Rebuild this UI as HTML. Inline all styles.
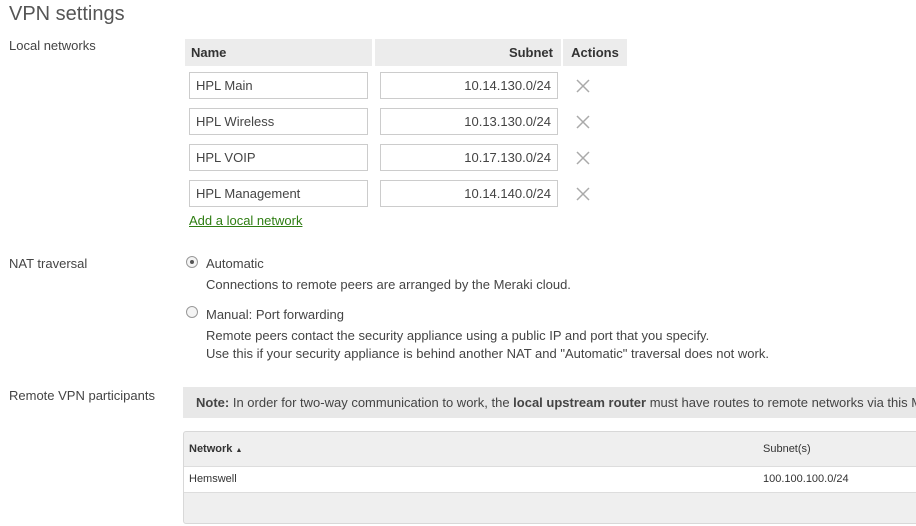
<!DOCTYPE html>
<html><head><style>
body{margin:0;width:916px;height:526px;background:#fff;font-family:"Liberation Sans",Arial,sans-serif;color:#333;position:relative;overflow:hidden}
.a{position:absolute;white-space:nowrap}
.l{font-size:13px;color:#444}
.hd{background:#ececec;height:27px;top:39px;font-size:13px;font-weight:bold;line-height:27px;color:#333}
.in{border:1px solid #ccc;height:25px;line-height:25px;font-size:13px;color:#444;background:#fff;box-sizing:content-box}
.x{width:14px;height:14px}
.r{width:10px;height:10px;border:1px solid #999;border-radius:50%;background:#f4f4f4}
</style></head><body>
<div class="a" style="left:9px;top:3px;font-size:20px;color:#555">VPN settings</div>
<div class="a l" style="left:9px;top:38px">Local networks</div>
<div class="a hd" style="left:185px;width:181px;padding-left:6px">Name</div>
<div class="a hd" style="left:375px;width:178px;text-align:right;padding-right:8px">Subnet</div>
<div class="a hd" style="left:563px;width:64px;text-align:center">Actions</div>

<div class="a in" style="left:189px;top:72px;width:171px;padding-left:6px">HPL Main</div>
<div class="a in" style="left:380px;top:72px;width:170px;text-align:right;padding-right:6px">10.14.130.0/24</div>
<svg class="a x" style="left:576px;top:79px" viewBox="0 0 14 14"><path d="M1 1L13 13M13 1L1 13" stroke="#aaa" stroke-width="1.5"/></svg>
<div class="a in" style="left:189px;top:108px;width:171px;padding-left:6px">HPL Wireless</div>
<div class="a in" style="left:380px;top:108px;width:170px;text-align:right;padding-right:6px">10.13.130.0/24</div>
<svg class="a x" style="left:576px;top:115px" viewBox="0 0 14 14"><path d="M1 1L13 13M13 1L1 13" stroke="#aaa" stroke-width="1.5"/></svg>
<div class="a in" style="left:189px;top:144px;width:171px;padding-left:6px">HPL VOIP</div>
<div class="a in" style="left:380px;top:144px;width:170px;text-align:right;padding-right:6px">10.17.130.0/24</div>
<svg class="a x" style="left:576px;top:151px" viewBox="0 0 14 14"><path d="M1 1L13 13M13 1L1 13" stroke="#aaa" stroke-width="1.5"/></svg>
<div class="a in" style="left:189px;top:180px;width:171px;padding-left:6px">HPL Management</div>
<div class="a in" style="left:380px;top:180px;width:170px;text-align:right;padding-right:6px">10.14.140.0/24</div>
<svg class="a x" style="left:576px;top:187px" viewBox="0 0 14 14"><path d="M1 1L13 13M13 1L1 13" stroke="#aaa" stroke-width="1.5"/></svg>
<div class="a" style="left:189px;top:213px;font-size:13px;color:#2e7d12;text-decoration:underline">Add a local network</div>

<div class="a l" style="left:9px;top:256px">NAT traversal</div>
<div class="a r" style="left:186px;top:256px"><div style="width:4px;height:4px;background:#555;border-radius:50%;margin:3px"></div></div>
<div class="a l" style="left:206px;top:256px">Automatic</div>
<div class="a l" style="left:206px;top:277px">Connections to remote peers are arranged by the Meraki cloud.</div>
<div class="a r" style="left:186px;top:306px"></div>
<div class="a l" style="left:206px;top:307px">Manual: Port forwarding</div>
<div class="a l" style="left:206px;top:328px">Remote peers contact the security appliance using a public IP and port that you specify.</div>
<div class="a l" style="left:206px;top:346px">Use this if your security appliance is behind another NAT and "Automatic" traversal does not work.</div>

<div class="a l" style="left:9px;top:388px">Remote VPN participants</div>
<div class="a" style="left:183px;top:387px;width:733px;height:31px;background:#e8e8e8"></div>
<div class="a l" style="left:196px;top:395px;color:#444"><b>Note:</b> In order for two-way communication to work, the <b>local upstream router</b> must have routes to remote networks via this MX</div>
<div class="a" style="left:183px;top:431px;width:740px;height:91px;border:1px solid #d8d8d8;border-radius:3px;background:#efefef"></div>
<div class="a" style="left:184px;top:466px;width:740px;height:25px;background:#fff;border-top:1px solid #ddd;border-bottom:1px solid #ddd"></div>
<div class="a" style="left:189px;top:443px;font-size:11px;font-weight:bold;color:#333">Network <span style="font-size:7px">▲</span></div>
<div class="a" style="left:763px;top:443px;font-size:11px;color:#333">Subnet(s)</div>
<div class="a" style="left:189px;top:473px;font-size:11px;color:#333">Hemswell</div>
<div class="a" style="left:763px;top:473px;font-size:11px;color:#333">100.100.100.0/24</div>
</body></html>
